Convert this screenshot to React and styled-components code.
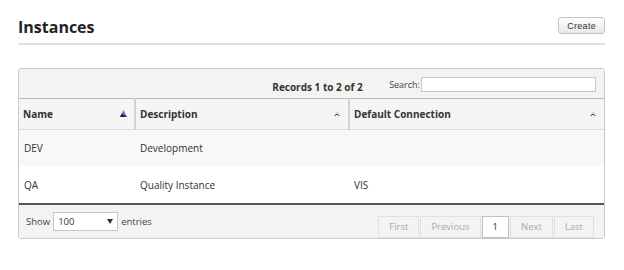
import React from 'react'
import styled, { createGlobalStyle } from 'styled-components'

const GlobalStyle = createGlobalStyle`
  body {
    margin: 0;
    background: #fff;
    font-family: "Open Sans", "Liberation Sans", sans-serif;
    color: #333;
  }
`

const Page = styled.div`
  padding: 0 19px 0 18px;
`

const Header = styled.div`
  display: flex;
  justify-content: space-between;
  align-items: flex-start;
  height: 27px;
  padding-top: 16px;
  border-bottom: 2px solid #e1e1e1;
  margin-bottom: 23px;
`

const Title = styled.h1`
  margin: 0;
  font-size: 16px;
  line-height: 22px;
  font-weight: 700;
  color: #222;
`

const CreateButton = styled.button`
  margin-top: 1px;
  height: 17px;
  padding: 0 8px;
  font-family: "Liberation Sans", Arial, sans-serif;
  font-size: 9px;
  letter-spacing: 0.3px;
  color: #333;
  background: linear-gradient(#fdfdfd, #e9e9e9);
  border: 1px solid #c4c4c4;
  border-radius: 3px;
`

const Panel = styled.div`
  border: 1px solid #c9c9c9;
  border-radius: 3px;
  overflow: hidden;
  background: #fff;
`

const Toolbar = styled.div`
  display: grid;
  grid-template-columns: 1fr auto 1fr;
  height: 29px;
  background: #f3f3f3;
  padding: 0 8px;
`

const Records = styled.div`
  grid-column: 2;
  align-self: end;
  padding: 0 0 4px 12px;
  font-size: 10px;
  font-weight: 700;
  color: #333;
`

const Search = styled.label`
  grid-column: 3;
  justify-self: end;
  display: flex;
  align-items: center;
  gap: 1px;
  margin-top: 7px;
  height: 17px;
  font-size: 9px;
  color: #444;
`

const SearchInput = styled.input`
  width: 171px;
  height: 13px;
  border: 1px solid #c8c8c8;
  padding: 0 1px;
  background: #fff;
`

const Table = styled.table`
  width: 100%;
  border-collapse: collapse;
  table-layout: fixed;
  font-size: 10px;
`

const Th = styled.th`
  position: relative;
  box-sizing: border-box;
  width: ${p => p.$w || 'auto'};
  height: 31px;
  padding: 0 4px;
  text-align: left;
  font-weight: 700;
  color: #333;
  background: #f5f5f5;
  border-top: 1px solid #bcbcbc;
  border-bottom: 1px solid #dcdcdc;
  border-left: ${p => (p.$first ? 'none' : '2px solid #d2d2d2')};
`

const SortIcon = styled.svg`
  position: absolute;
  right: 7px;
  top: 12px;
`

const Row = styled.tr`
  background: ${p => (p.$odd ? '#f8f8f8' : '#fff')};
`

const Td = styled.td`
  height: ${p => p.$h || 36}px;
  padding: 0 5px;
  color: #333;
  font-size: 10px;
  border-bottom: ${p => (p.$last ? '2px solid #555' : 'none')};
`

const Footer = styled.div`
  display: flex;
  align-items: center;
  justify-content: space-between;
  height: 33px;
  padding: 0 10px 0 7px;
  background: #f3f3f3;
`

const Length = styled.div`
  display: flex;
  align-items: center;
  gap: 3px;
  font-size: 9.5px;
  color: #444;
  margin-top: -1px;
`

const Select = styled.div`
  display: flex;
  align-items: center;
  justify-content: space-between;
  width: 55px;
  height: 17px;
  padding: 0 4px;
  background: #fff;
  border: 1px solid #c8c8c8;
  font-size: 9.5px;
  color: #333;
`

const Pager = styled.div`
  display: flex;
  gap: 1px;
  margin-top: 11px;
`

const PageButton = styled.div`
  height: 20px;
  line-height: 20px;
  padding: 0 ${p => p.$px || 10}px;
  font-size: 9.5px;
  color: ${p => (p.$active ? '#333' : '#aaa')};
  background: ${p => (p.$active ? '#fff' : '#f3f3f3')};
  border: 1px solid ${p => (p.$active ? '#c0c0c0' : '#e0e0e0')};
`

const Caret = () => (
  <SortIcon width="8" height="6" viewBox="0 0 8 6">
    <path d="M1 5 L4 2 L7 5" fill="none" stroke="#d0d0d0" strokeWidth="1.6" />
    <path d="M2 5 L4 3 L6 5" fill="none" stroke="#444" strokeWidth="1" />
  </SortIcon>
)

const AscIcon = () => (
  <SortIcon width="7" height="7" viewBox="0 0 8 8" style={{ top: 11 }}>
    <polygon points="4,0 8,8 0,8" fill="#7a6ee0" />
    <polygon points="2,4 8,8 0,8" fill="#222" />
  </SortIcon>
)

const rows = [
  { name: 'DEV', description: 'Development', connection: '' },
  { name: 'QA', description: 'Quality Instance', connection: 'VIS' },
]

export default function App() {
  return (
    <Page>
      <GlobalStyle />
      <Header>
        <Title>Instances</Title>
        <CreateButton>Create</CreateButton>
      </Header>
      <Panel>
        <Toolbar>
          <Records>Records 1 to 2 of 2</Records>
          <Search>
            Search:
            <SearchInput />
          </Search>
        </Toolbar>
        <Table>
          <thead>
            <tr>
              <Th $first $w="116px">
                Name
                <AscIcon />
              </Th>
              <Th $w="214px">
                Description
                <Caret />
              </Th>
              <Th>
                Default Connection
                <Caret />
              </Th>
            </tr>
          </thead>
          <tbody>
            {rows.map((r, i) => {
              const last = i === rows.length - 1
              return (
                <Row key={r.name} $odd={i % 2 === 0}>
                  <Td $last={last} $h={last ? 37 : 36}>{r.name}</Td>
                  <Td $last={last}>{r.description}</Td>
                  <Td $last={last}>{r.connection}</Td>
                </Row>
              )
            })}
          </tbody>
        </Table>
        <Footer>
          <Length>
            Show
            <Select>
              100
              <svg width="6" height="5" viewBox="0 0 6 5">
                <polygon points="0,0 6,0 3,5" fill="#333" />
              </svg>
            </Select>
            entries
          </Length>
          <Pager>
            <PageButton>First</PageButton>
            <PageButton>Previous</PageButton>
            <PageButton $active $px={10}>1</PageButton>
            <PageButton>Next</PageButton>
            <PageButton>Last</PageButton>
          </Pager>
        </Footer>
      </Panel>
    </Page>
  )
}
